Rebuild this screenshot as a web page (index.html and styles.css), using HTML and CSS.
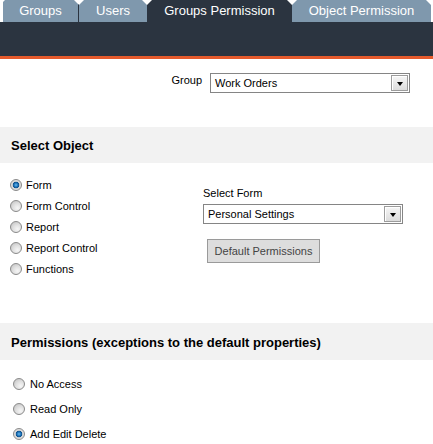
FILE: index.html
```html
<!DOCTYPE html>
<html>
<head>
<meta charset="utf-8">
<link rel="stylesheet" href="styles.css">
</head>
<body>
<div class="tabs">
  <div class="tab tab-first">Groups</div>
  <div class="tab tab-users">Users</div>
  <div class="tab tab-active">Groups Permission</div>
  <div class="tab tab-object">Object Permission</div>
</div>
<div class="bar"></div>

<div class="group-row">
  <span class="group-label">Group</span>
  <div class="select select-group">
    <span class="select-text">Work Orders</span>
    <span class="select-btn"><span class="tri"></span></span>
  </div>
</div>

<div class="band band-object">Select Object</div>

<div class="object-area">
  <div class="radio-list">
    <div class="radio-row"><span class="radio on"></span><span>Form</span></div>
    <div class="radio-row"><span class="radio"></span><span>Form Control</span></div>
    <div class="radio-row"><span class="radio"></span><span>Report</span></div>
    <div class="radio-row"><span class="radio"></span><span>Report Control</span></div>
    <div class="radio-row"><span class="radio"></span><span>Functions</span></div>
  </div>
  <div class="form-col">
    <div class="form-label">Select Form</div>
    <div class="select select-form">
      <span class="select-text">Personal Settings</span>
      <span class="select-btn"><span class="tri"></span></span>
    </div>
    <div class="btn">Default Permissions</div>
  </div>
</div>

<div class="band band-perm">Permissions (exceptions to the default properties)</div>

<div class="perm-list">
  <div class="perm-row"><span class="radio"></span><span>No Access</span></div>
  <div class="perm-row"><span class="radio"></span><span>Read Only</span></div>
  <div class="perm-row"><span class="radio on"></span><span>Add Edit Delete</span></div>
</div>
</body>
</html>
```

FILE: styles.css
```css
html, body {
  margin: 0;
  padding: 0;
  background: #fff;
  font-family: "Liberation Sans", Arial, sans-serif;
  color: #000;
  width: 433px;
  overflow: hidden;
}

.tabs {
  display: flex;
  height: 22px;
  padding-left: 3px;
  background: #fff;
}

.tab {
  box-sizing: border-box;
  height: 22px;
  line-height: 22px;
  font-size: 13px;
  color: #fff;
  background: #7f98ad;
  text-align: center;
  clip-path: polygon(5px 0, calc(100% - 5px) 0, 100% 5px, 100% 100%, 0 100%, 0 5px);
}

.tab-first {
  width: 76px;
  border-right: 1px solid #2b3440;
  clip-path: polygon(2px 0, calc(100% - 5px) 0, 100% 5px, 100% 100%, 0 100%, 0 2px);
}

.tab-users { width: 68px; }

.tab-active {
  width: 145px;
  background: #2b3440;
}

.tab-object { width: 139px; }

.bar {
  height: 34px;
  background: #2b3440;
  border-bottom: 3px solid #e65a2c;
}

.group-row {
  display: flex;
  justify-content: flex-end;
  align-items: flex-start;
  padding-right: 23px;
  margin-top: 14px;
  gap: 8px;
}

.group-label {
  font-size: 11px;
  line-height: 13px;
  margin-top: 1px;
}

.select {
  box-sizing: border-box;
  display: flex;
  height: 20px;
  border: 1px solid #858585;
  background: #fff;
  font-size: 11px;
  color: #000;
}

.select-group { width: 200px; }
.select-form { width: 200px; }

.select-text {
  flex: 1;
  line-height: 19px;
  padding-left: 4px;
}

.select-btn {
  box-sizing: border-box;
  width: 17px;
  height: 16px;
  margin: 1px 1px 1px 0;
  border: 1px solid #9c9c9c;
  background: linear-gradient(#f6f6f6, #dcdcdc);
  box-shadow: inset 1px 1px 0 #fff;
  display: flex;
  align-items: center;
  justify-content: center;
}

.tri {
  width: 0;
  height: 0;
  border-left: 3.5px solid transparent;
  border-right: 3.5px solid transparent;
  border-top: 4px solid #000;
  margin-top: 1px;
}

.band {
  background: #f2f2f2;
  font-size: 13px;
  font-weight: bold;
  padding-left: 11px;
  color: #000;
  overflow: hidden;
  white-space: nowrap;
}

.band-object {
  margin-top: 34px;
  height: 36px;
  line-height: 38px;
}

.band-perm {
  height: 37px;
  line-height: 39px;
}

.object-area {
  display: flex;
  height: 160px;
}

.radio-list {
  width: 203px;
  padding-top: 11px;
  box-sizing: border-box;
}

.radio-row {
  display: flex;
  align-items: center;
  height: 21px;
  padding-left: 10px;
  gap: 4px;
  font-size: 11px;
}

.radio {
  box-sizing: border-box;
  width: 12px;
  height: 12px;
  border-radius: 50%;
  border: 1px solid #8a8a8a;
  background: radial-gradient(circle at 65% 70%, #f6f6f6 0, #e0e0e0 45%, #bdbdbd 100%);
  flex: none;
}

.radio.on {
  background: radial-gradient(circle at 50% 50%, #6bbcf0 0, #1b70b6 2px, #0e4f8a 3px, #d6d6d6 3.6px, #eeeeee 100%);
}

.form-col {
  padding-top: 24px;
  display: flex;
  flex-direction: column;
  align-items: flex-start;
}

.form-label {
  font-size: 11px;
  line-height: 13px;
}

.select-form {
  margin-top: 4px;
}

.btn {
  box-sizing: border-box;
  margin-top: 15px;
  margin-left: 4px;
  width: 113px;
  height: 24px;
  line-height: 22px;
  border: 1px solid #9a9a9a;
  background: #dddddd;
  font-size: 11px;
  color: #444;
  text-align: center;
}

.perm-list {
  padding-top: 11px;
}

.perm-row {
  display: flex;
  align-items: center;
  height: 25px;
  padding-left: 13px;
  gap: 5px;
  font-size: 11px;
}
```
